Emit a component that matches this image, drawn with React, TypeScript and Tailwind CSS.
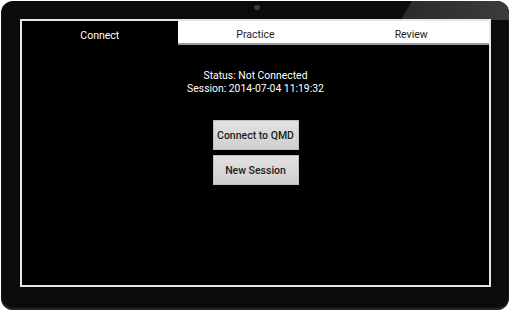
export default function App() {
  const tabs = ['Connect', 'Practice', 'Review']
  const active = 0

  return (
    <div className="w-[512px] h-[312px] bg-white p-px font-['Roboto',sans-serif]">
      <div className="relative w-[508px] h-[309px] rounded-[12px] bg-[#0b0b0b] pt-[18px] pl-[19px] pr-[18px] pb-[23px] shadow-[inset_0_-2px_2px_#2a2a2a] overflow-hidden">
        {/* glare on the bezel */}
        <div className="absolute top-0 right-0 w-[108px] h-[19px] bg-gradient-to-r from-[#2a2a2a] to-[#3c3c3c] [clip-path:polygon(10%_0,100%_0,100%_100%,0_100%)]" />
        {/* camera */}
        <div className="absolute left-[253px] top-[4px] w-[6px] h-[5px] rounded-full bg-[#3a3a3a]" />

        <div className="relative h-full border-2 border-[#e6e6e6] bg-black flex flex-col">
          <div className="grid grid-cols-3 h-[23px] shrink-0">
            {tabs.map((t, i) => (
              <div
                key={t}
                className={
                  i === active
                    ? 'flex items-center justify-center pt-[5px] text-[10.5px] text-white bg-black'
                    : 'flex items-center justify-center pt-[6px] text-[10.5px] text-[#222] bg-white border-b-2 border-[#9a9a9a]'
                }
              >
                {t}
              </div>
            ))}
          </div>

          <div className="flex flex-col items-center pt-[25px] text-[10.4px] leading-[13px] text-white">
            <p>Status: Not Connected</p>
            <p>Session: 2014-07-04 11:19:32</p>

            <div className="flex flex-col gap-[5px] mt-[25px]">
              <button className="w-[86px] h-[30px] bg-gradient-to-b from-[#e2e2e2] to-[#cfcfcf] border border-[#bdbdbd] text-[10.5px] font-medium text-[#1c1c1c]">
                Connect to QMD
              </button>
              <button className="w-[86px] h-[30px] bg-gradient-to-b from-[#e2e2e2] to-[#cfcfcf] border border-[#bdbdbd] text-[10.5px] font-medium text-[#1c1c1c]">
                New Session
              </button>
            </div>
          </div>
        </div>
      </div>
    </div>
  )
}
